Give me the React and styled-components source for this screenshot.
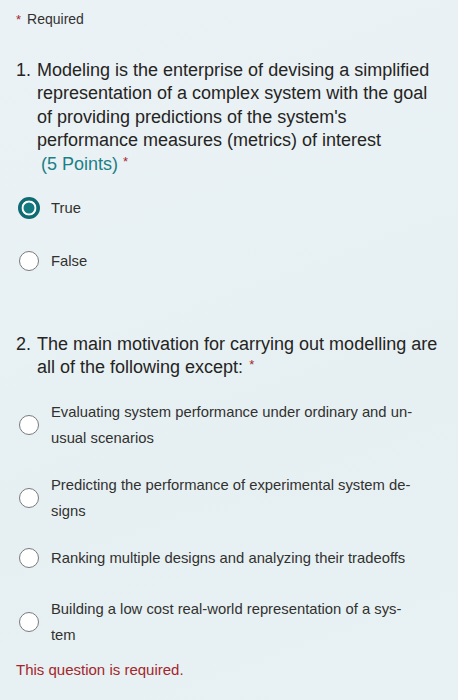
import React from 'react';
import styled, { createGlobalStyle } from 'styled-components';

const Global = createGlobalStyle`
  body {
    margin: 0;
    background: #e9f1f4;
    font-family: "Liberation Sans", Arial, sans-serif;
    color: #323130;
  }
`;

const Page = styled.div`
  padding: 9px 16px 0 16px;
  min-height: 700px;
  box-sizing: border-box;
  background: linear-gradient(160deg, #ebf2f5 0%, #e6f0f2 60%, #e8f1f3 100%);
`;

const Star = styled.span`
  color: #a4262c;
  font-size: 13px;
  line-height: 0;
  vertical-align: ${p => p.$lift || 4}px;
  margin-left: ${p => p.$gap || 0}px;
`;

const RequiredNote = styled.div`
  font-size: 14px;
  line-height: 20px;
  display: flex;
  gap: 6px;
  align-items: baseline;
`;

const Question = styled.div`
  margin-top: ${p => p.$top}px;
`;

const Title = styled.div`
  display: flex;
  font-size: 18px;
  line-height: 23.4px;
  color: #252423;
`;

const Num = styled.span`
  flex: 0 0 21px;
`;

const Points = styled.span`
  display: block;
  color: #1b7f86;
  padding-left: 4px;
`;

const Options = styled.div`
  margin-top: ${p => p.$top}px;
  display: flex;
  flex-direction: column;
  gap: ${p => p.$gap}px;
`;

const Option = styled.label`
  display: flex;
  align-items: center;
  gap: 12px;
  padding-left: 3px;
  margin-top: ${p => p.$push || 0}px;
  font-size: 14.8px;
  line-height: 26px;
  color: #323130;
`;

const Radio = styled.span`
  flex: 0 0 auto;
  width: 20px;
  height: 20px;
  border-radius: 50%;
  box-sizing: border-box;
  background: ${p => (p.$on ? '#137a80' : '#fff')};
  border: ${p => (p.$on ? '3px solid #0f6a72' : '1.5px solid #7a7a7a')};
  box-shadow: ${p => (p.$on ? 'inset 0 0 0 2px #fff' : 'none')};
  transform: ${p => (p.$on ? 'scale(1.1)' : 'none')};
`;

const ErrorText = styled.div`
  margin-top: 13px;
  font-size: 15px;
  color: #a4262c;
`;

const Opt = ({ on, push, children }) => (
  <Option $push={push}>
    <Radio $on={on} />
    <span>{children}</span>
  </Option>
);

export default function App() {
  return (
    <>
      <Global />
      <Page>
        <RequiredNote>
          <Star $lift={3}>*</Star>
          <span>Required</span>
        </RequiredNote>

        <Question $top={30}>
          <Title>
            <Num>1.</Num>
            <div>
              Modeling is the enterprise of devising a simplified representation of a complex system with the goal
              of providing predictions of the system's performance measures (metrics) of interest
              <Points>
                (5 Points)<Star $gap={5}>*</Star>
              </Points>
            </div>
          </Title>
          <Options $top={19} $gap={27}>
            <Opt on>True</Opt>
            <Opt>False</Opt>
          </Options>
        </Question>

        <Question $top={59}>
          <Title>
            <Num>2.</Num>
            <div>
              The main motivation for carrying out modelling are all of the following except:
              <Star $gap={6}>*</Star>
            </div>
          </Title>
          <Options $top={19} $gap={21}>
            <Opt>
              Evaluating system performance under ordinary and un-
              <br />
              usual scenarios
            </Opt>
            <Opt>
              Predicting the performance of experimental system de-
              <br />
              signs
            </Opt>
            <Opt>Ranking multiple designs and analyzing their tradeoffs</Opt>
            <Opt push={4}>
              Building a low cost real-world representation of a sys-
              <br />
              tem
            </Opt>
          </Options>
        </Question>

        <ErrorText>This question is required.</ErrorText>
      </Page>
    </>
  );
}
